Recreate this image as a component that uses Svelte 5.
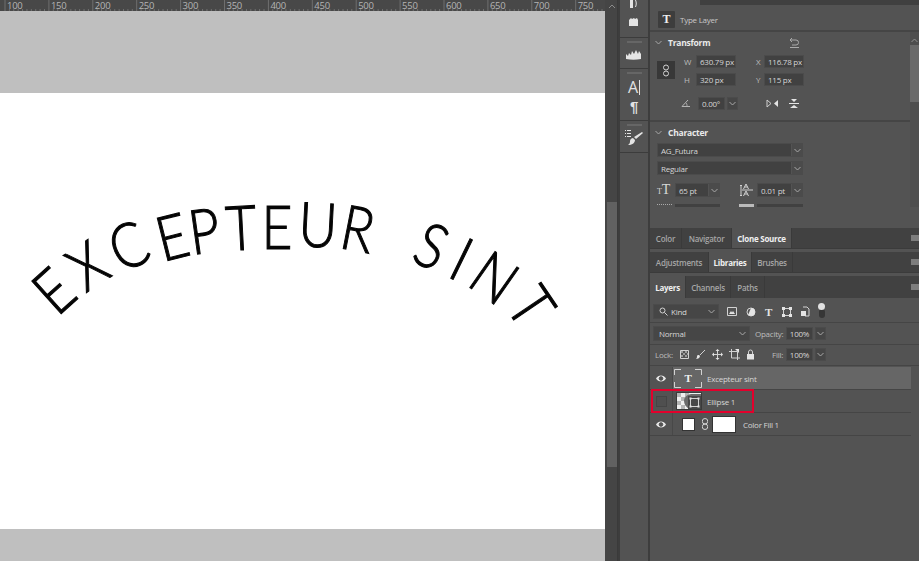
<script lang="ts">
  // Photoshop window: document canvas on the left, docked panels on the right.
  const rulerLabels = Array.from({ length: 14 }, (_, i) => ({ x: 5 + i * 43.9, label: String(100 + i * 50) }));
  const rulerTicks = Array.from({ length: 140 }, (_, i) => 5 + (i * 43.9) / 10).filter((_, i) => i % 10 !== 0);

  // curved type: centre point and rotation of each glyph
  const letters = [
    { c: 'E', x: 53, y: 290, r: -42 },
    { c: 'X', x: 87, y: 265, r: -33 },
    { c: 'C', x: 128, y: 245, r: -24 },
    { c: 'E', x: 172, y: 236, r: -14 },
    { c: 'P', x: 204, y: 230, r: -8 },
    { c: 'T', x: 241, y: 227, r: -3 },
    { c: 'E', x: 277, y: 226, r: 0 },
    { c: 'U', x: 318, y: 224, r: 3 },
    { c: 'R', x: 358, y: 228, r: 11 },
    { c: 'S', x: 432, y: 245, r: 24 },
    { c: 'I', x: 462, y: 258, r: 26 },
    { c: 'N', x: 495, y: 277, r: 35 },
    { c: 'T', x: 532, y: 306, r: 56 },
  ];
</script>

<div class="app">
  <div class="doc">
    <svg class="ruler" width="605" height="11">
      {#each rulerLabels as m}
        <line x1={m.x} x2={m.x} y1="0" y2="11" />
        <text x={m.x + 2} y="9">{m.label}</text>
      {/each}
      {#each rulerTicks as x}
        <line x1={x} x2={x} y1="9" y2="11" />
      {/each}
    </svg>
    <div class="paste top"></div>
    <div class="page">
      <svg class="type" width="605" height="436" viewBox="0 93 605 436">
        {#each letters as l}
          <text transform={`translate(${l.x} ${l.y}) rotate(${l.r}) scale(0.86 1)`} y="23" text-anchor="middle">{l.c}</text>
        {/each}
      </svg>
    </div>
    <div class="paste bottom"></div>
  </div>

  <div class="vscroll">
    <svg class="up" width="8" height="6" viewBox="0 0 8 6"><path d="M1 5l3-3 3 3" /></svg>
    <div class="thumb"></div>
  </div>

  <div class="strip">
    <div class="group g1">
      <svg width="16" height="34" viewBox="0 0 16 34">
        <path class="solid" d="M4 0h3v8H4zM9 0h1c1 2 1 5 0 7H9c1-2 1-5 0-7zM3 20l2-2 1 1 2-1 1 1 2-1 1 2v6H3z" />
      </svg>
    </div>
    <div class="group g2">
      <i class="grip"></i>
      <svg width="18" height="12" viewBox="0 0 18 12">
        <path class="solid" d="M1 5l2 2 1-3 2 2 1-4 2 3 2-4 2 4 1-3 2 3v5c-5 1-10 1-15 0z" />
      </svg>
    </div>
    <div class="group g3">
      <i class="grip"></i>
      <div class="a-glyph">A<b></b></div>
      <div class="pilcrow">¶</div>
    </div>
    <div class="group g4">
      <i class="grip"></i>
      <svg width="20" height="18" viewBox="0 0 20 18">
        <path class="solid" d="M1 1h1v1H1zM1 4h1v1H1zM1 7h1v1H1zM3 1h4v1H3zM3 4h4v1H3zM3 7h4v1H3zM18 3l1 1-7 6-2-2zM9 9l2 2c0 3-3 5-7 5 2-1 2-3 2-4 0-2 2-3 3-3z" />
      </svg>
    </div>
  </div>

  <div class="panels">
    <section class="properties">
      <div class="topfield"><span></span></div>
      <div class="kind">
        <span class="kind-icon">T</span>
        <span>Type Layer</span>
      </div>
      <div class="prop-body">
        <div class="prop-main">
          <div class="head transform-head">
            <svg class="chev" width="7" height="5" viewBox="0 0 7 5"><path d="M.5 1l3 3 3-3" /></svg>
            <strong>Transform</strong>
            <svg class="reset" width="11" height="11" viewBox="0 0 11 11"><path d="M3 1L1 3l2 2M1 3h6a2.500 2.500 0 0 1 0 5H3M1 10.500h9" /></svg>
          </div>
          <div class="transform">
            <div class="link">
              <svg width="8" height="13" viewBox="0 0 8 13"><path d="M4 1a2.500 2.500 0 0 1 0 5 2.500 2.500 0 0 1 0-5zM4 7a2.500 2.500 0 0 1 0 5 2.500 2.500 0 0 1 0-5z" /></svg>
            </div>
            <div class="tgrid">
              <span class="axis">W</span><span class="field">630.79 px</span>
              <span class="axis right">X</span><span class="field">116.78 px</span>
              <span class="axis">H</span><span class="field">320 px</span>
              <span class="axis right">Y</span><span class="field">115 px</span>
            </div>
          </div>
          <div class="angle-row">
            <svg class="angle" width="10" height="8" viewBox="0 0 10 8"><path d="M9 7.500H1L7 1M5 4c1 1 1 2 1 3.500" /></svg>
            <span class="field angle-field">0.00°</span>
            <span class="drop"><svg class="chev" width="7" height="5" viewBox="0 0 7 5"><path d="M.5 1l3 3 3-3" /></svg></span>
            <svg class="flip-h" width="13" height="9" viewBox="0 0 13 9"><path d="M1 1l4 3.500L1 8z" /><path class="solid" d="M12 1L8 4.500 12 8z" /></svg>
            <svg class="flip-v" width="10" height="11" viewBox="0 0 10 11"><path class="solid" d="M2 1h6L5 4zM0 5h10v1H0zM5 7l4 3H1z" /></svg>
          </div>

          <div class="head char-head">
            <svg class="chev" width="7" height="5" viewBox="0 0 7 5"><path d="M.5 1l3 3 3-3" /></svg>
            <strong>Character</strong>
          </div>
          <div class="select wide">AG_Futura<span class="drop-in"><svg class="chev" width="7" height="5" viewBox="0 0 7 5"><path d="M.5 1l3 3 3-3" /></svg></span></div>
          <div class="select wide second">Regular<span class="drop-in"><svg class="chev" width="7" height="5" viewBox="0 0 7 5"><path d="M.5 1l3 3 3-3" /></svg></span></div>
          <div class="size-row">
            <span class="size-icon"><small>T</small>T</span>
            <span class="select size">65 pt<span class="drop-in"><svg class="chev" width="7" height="5" viewBox="0 0 7 5"><path d="M.5 1l3 3 3-3" /></svg></span></span>
            <span class="lead-icon">
              <svg width="14" height="14" viewBox="0 0 14 14"><path d="M4.500 6L7 1l2.500 5M5.500 4h3M4.500 13L7 8l2.500 5M5.500 11h3M2 2v11M1 3l1-1 1 1M1 12l1 1 1-1M3 7h11" /></svg>
            </span>
            <span class="select lead">0.01 pt<span class="drop-in"><svg class="chev" width="7" height="5" viewBox="0 0 7 5"><path d="M.5 1l3 3 3-3" /></svg></span></span>
          </div>
          <div class="clip-row">
            <span class="clip-a"></span><span class="clip-field"></span>
            <span class="clip-b"></span><span class="clip-field right"></span>
          </div>
        </div>
        <div class="prop-scroll">
          <svg width="7" height="5" viewBox="0 0 7 5"><path d="M.5 4l3-3 3 3" /></svg>
          <div class="prop-thumb"></div>
        </div>
      </div>
    </section>

    <div class="tabs row1">
      <span class="tab w32">Color</span><span class="tab w50">Navigator</span><span class="tab on w60">Clone Source</span>
      <i class="menu"></i>
    </div>
    <div class="tabs row2">
      <span class="tab w59">Adjustments</span><span class="tab on w43">Libraries</span><span class="tab w41">Brushes</span>
      <i class="menu"></i>
    </div>
    <div class="tabs row3">
      <span class="tab on w36">Layers</span><span class="tab w45">Channels</span><span class="tab w34">Paths</span>
      <i class="menu"></i>
    </div>

    <div class="tool filter">
      <div class="select kindsel">
        <svg width="9" height="9" viewBox="0 0 9 9"><circle cx="3.500" cy="3.500" r="2.500" /><path d="M5.500 5.500L8.500 8.500" /></svg>
        Kind
        <svg class="chev end" width="7" height="5" viewBox="0 0 7 5"><path d="M.5 1l3 3 3-3" /></svg>
      </div>
      <div class="filter-icons">
        <svg width="10" height="9" viewBox="0 0 10 9"><path d="M.5.500h9v8h-9z" /><path class="solid" d="M2 7l2-3 1 1.500L6 4l2 3z" /></svg>
        <svg width="10" height="10" viewBox="0 0 10 10"><circle cx="5" cy="5" r="4" /><path class="solid" d="M5 1a4 4 0 0 1 0 8l-3-1z" /></svg>
        <span class="t-mark">T</span>
        <svg width="10" height="10" viewBox="0 0 10 10"><path d="M1.500 1.500h7v7h-7z" /><path class="solid" d="M0 0h3v3H0zM7 0h3v3H7zM0 7h3v3H0zM7 7h3v3H7z" /></svg>
        <svg width="10" height="11" viewBox="0 0 10 11"><path d="M3 1h4l2 2v7H5" /><path class="solid" d="M1 5h5v5H1z" /></svg>
      </div>
      <div class="toggle"><i></i></div>
    </div>

    <div class="tool blend">
      <div class="select normal">Normal<svg class="chev end" width="7" height="5" viewBox="0 0 7 5"><path d="M.5 1l3 3 3-3" /></svg></div>
      <span class="lbl opacity">Opacity:</span>
      <span class="field pct">100%</span>
      <span class="drop small"><svg class="chev" width="7" height="5" viewBox="0 0 7 5"><path d="M.5 1l3 3 3-3" /></svg></span>
    </div>

    <div class="tool lock">
      <span class="lbl">Lock:</span>
      <div class="lock-icons">
        <svg width="9" height="9" viewBox="0 0 9 9"><path d="M.5.500h8v8h-8z" /><path class="solid dim" d="M1 1h2v2H1zM5 1h2v2H5zM3 3h2v2H3zM7 3h1v2H7zM1 5h2v2H1zM5 5h2v2H5z" /></svg>
        <svg width="11" height="11" viewBox="0 0 11 11"><path d="M10 1L5 6" /><path class="solid" d="M4 6l1 1c0 2-2 3-4 3 1-1 1-2 1-3 0-1 1-1 2-1z" /></svg>
        <svg width="11" height="11" viewBox="0 0 11 11"><path d="M5.500 1v9M1 5.500h9" /><path class="solid" d="M5.500 0l2 2h-4zM5.500 11l-2-2h4zM0 5.500l2-2v4zM11 5.500l-2 2v-4z" /></svg>
        <svg width="11" height="11" viewBox="0 0 11 11"><path d="M2.500 0v9H11M0 2.500h8.500V11" /><path class="solid" d="M6 0h4v4z" /></svg>
        <svg width="9" height="11" viewBox="0 0 9 11"><path d="M2.500 5V3a2 2 0 0 1 4 0v2" /><path class="solid" d="M1 5h7v5.500H1z" /></svg>
      </div>
      <span class="lbl fill">Fill:</span>
      <span class="field pct">100%</span>
      <span class="drop small"><svg class="chev" width="7" height="5" viewBox="0 0 7 5"><path d="M.5 1l3 3 3-3" /></svg></span>
    </div>

    <div class="layers">
      <div class="layer">
        <span class="eye-col"><svg class="eye" width="10" height="7" viewBox="0 0 10 7"><path class="solid" d="M0 3.500C2-.5 8-.5 10 3.500 8 7.500 2 7.500 0 3.500z" /><circle class="hole" cx="5" cy="3.500" r="1.800" /></svg></span>
        <div class="layer-body selected">
          <div class="type-thumb">
            <svg class="brackets" width="28" height="19" viewBox="0 0 28 19"><path d="M7 .5H.5V6M21 .5h6.500V6M7 18.500H.5V13M21 18.500h6.500V13" /></svg>
            <span>T</span>
          </div>
          <span class="name">Excepteur sint</span>
        </div>
      </div>
      <div class="layer">
        <span class="eye-col"><i class="off"></i></span>
        <div class="layer-body">
          <div class="shape-thumb">
            <svg width="24" height="16" viewBox="0 0 24 16">
              <rect class="paper" width="24" height="16" />
              <path class="chk" d="M0 0h4v4H0zM8 0h4v4H8zM4 4h4v4H4zM0 8h4v4H0zM8 8h4v4H8zM4 12h4v4H4z" />
              <path class="blob" d="M14 1C9 2 7 5 7 8c0 3 2 6 5 8h12V1z" />
              <rect class="corner" x="11" y="3" width="13" height="13" />
              <path d="M13.500 5.500h8v8h-8z" />
              <path class="solid" d="M12.500 4.500h2v2h-2zM20.500 4.500h2v2h-2zM12.500 12.500h2v2h-2zM20.500 12.500h2v2h-2z" />
            </svg>
          </div>
          <span class="name">Ellipse 1</span>
        </div>
        <div class="callout"></div>
      </div>
      <div class="layer">
        <span class="eye-col"><svg class="eye" width="10" height="7" viewBox="0 0 10 7"><path class="solid" d="M0 3.500C2-.5 8-.5 10 3.500 8 7.500 2 7.500 0 3.500z" /><circle class="hole" cx="5" cy="3.500" r="1.800" /></svg></span>
        <div class="layer-body fillrow">
          <span class="swatch"></span>
          <svg class="chain" width="6" height="12" viewBox="0 0 6 12"><path d="M3 .500a2.300 2.300 0 0 1 0 5.500 2.300 2.300 0 0 1 0-5.500zM3 6a2.300 2.300 0 0 1 0 5.500A2.300 2.300 0 0 1 3 6z" /></svg>
          <span class="mask"></span>
          <span class="name color-name">Color Fill 1</span>
        </div>
      </div>
    </div>
  </div>
</div>

<style>
  :global(body) {
    margin: 0;
    background: #535353;
  }
  .app {
    display: flex;
    width: 919px;
    height: 561px;
    overflow: hidden;
    font-family: "Open Sans", "Liberation Sans", sans-serif;
    font-size: 8px;
    letter-spacing: -0.25px;
    color: #d4d4d4;
  }
  svg {
    display: block;
    flex: none;
  }
  svg path, svg circle {
    fill: none;
    stroke: #d2d2d2;
    stroke-width: 1;
  }
  svg path.solid {
    fill: #e4e4e4;
    stroke: none;
  }
  svg path.dim {
    fill: #9a9a9a;
  }

  /* document */
  .doc {
    width: 605px;
    flex: none;
    display: flex;
    flex-direction: column;
  }
  .ruler {
    background: #484848;
  }
  .ruler line {
    stroke: #8a8a8a;
    stroke-width: 0.6;
  }
  .ruler text {
    font-family: "Open Sans", sans-serif;
    font-size: 9.5px;
    fill: #b4b4b4;
  }
  .paste {
    background: #bfbfbf;
  }
  .top {
    height: 82px;
  }
  .bottom {
    flex: 1;
  }
  .page {
    height: 436px;
    background: #fff;
  }
  .type text {
    font-family: Lato, sans-serif;
    font-weight: 300;
    font-size: 62px;
    letter-spacing: 0;
    fill: #050505;
    stroke: #050505;
    stroke-width: 1.1px;
  }

  .vscroll {
    width: 13px;
    flex: none;
    box-sizing: border-box;
    padding-left: 2px;
    background: #454545;
    border-right: 1px solid #3a3a3a;
    display: flex;
    flex-direction: column;
    align-items: center;
  }
  .up {
    margin-top: 3px;
  }
  .up path {
    stroke: #8b8b8b;
  }
  .thumb {
    width: 10px;
    height: 265px;
    margin-top: 193px;
    background: #616161;
  }

  /* tool strip */
  .strip {
    width: 32px;
    flex: none;
    box-sizing: border-box;
    background: #535353;
    border-left: 2px solid #3d3d3d;
    border-right: 2px solid #3d3d3d;
  }
  .group {
    border-bottom: 1px solid #3c3c3c;
    display: flex;
    flex-direction: column;
    align-items: center;
    box-sizing: border-box;
  }
  .g1 { height: 38px; }
  .g2 { height: 31px; }
  .g3 { height: 52px; }
  .g4 { height: 32px; }
  .grip {
    display: block;
    width: 15px;
    height: 2px;
    margin: 3px 0 5px;
    background: #666;
  }
  .g2 svg { margin-top: 1px; }
  .a-glyph {
    display: flex;
    align-items: center;
    height: 20px;
    margin-top: -2px;
    font-family: "Open Sans", sans-serif;
    font-size: 16px;
    color: #e2e2e2;
  }
  .a-glyph b {
    width: 1px;
    height: 15px;
    margin-left: 1px;
    background: #e2e2e2;
  }
  .pilcrow {
    font-family: "Liberation Sans", sans-serif;
    font-size: 15px;
    font-weight: 700;
    color: #e2e2e2;
    line-height: 20px;
  }
  .g4 svg { margin-top: -2px; }

  /* right dock */
  .panels {
    flex: 1;
    min-width: 0;
    background: #535353;
    display: flex;
    flex-direction: column;
  }
  .topfield {
    height: 5px;
    padding-left: 50px;
  }
  .topfield span {
    display: block;
    height: 5px;
    background: #404040;
  }
  .kind {
    height: 27px;
    box-sizing: border-box;
    display: flex;
    align-items: center;
    gap: 5px;
    padding: 3px 0 0 8px;
    border-bottom: 2px solid #454545;
    color: #c8c8c8;
  }
  .kind-icon {
    width: 17px;
    height: 17px;
    background: #3d3d3d;
    border-radius: 1px;
    display: flex;
    align-items: center;
    justify-content: center;
    font-family: "Liberation Serif", serif;
    font-weight: 700;
    font-size: 12px;
    color: #eee;
  }
  .prop-body {
    display: flex;
    height: 175px;
  }
  .prop-main {
    flex: 1;
    overflow: hidden;
    padding-left: 7px;
  }
  .head {
    display: flex;
    align-items: center;
    height: 18px;
    gap: 6px;
    color: #eaeaea;
  }
  .head strong {
    font-size: 8.500px;
    font-weight: 700;
  }
  .transform-head {
    margin: 1px 0 0 -2px;
  }
  .chev path {
    stroke: #a8a8a8;
  }
  .reset {
    margin-left: 73px;
  }
  .reset path {
    stroke: #aaa;
  }
  .transform {
    display: flex;
    align-items: center;
    height: 40px;
    margin-top: -1px;
  }
  .link {
    width: 18px;
    height: 18px;
    background: #383838;
    display: flex;
    align-items: center;
    justify-content: center;
    margin-right: 9px;
  }
  .tgrid {
    display: grid;
    grid-template-columns: 12px 40px 28px 40px;
    row-gap: 5px;
    align-items: center;
  }
  .axis {
    color: #bcbcbc;
  }
  .axis.right {
    margin-left: 20px;
  }
  .field {
    display: flex;
    align-items: center;
    height: 13px;
    box-sizing: border-box;
    padding-left: 3px;
    background: #414141;
    border: 1px solid #4b4b4b;
    color: #d6d6d6;
    white-space: nowrap;
    overflow: hidden;
  }
  .angle-row {
    display: flex;
    align-items: center;
    height: 14px;
    margin-top: 6px;
    padding-left: 24px;
  }
  .angle {
    margin-right: 7px;
  }
  .angle path {
    stroke: #b4b4b4;
  }
  .angle-field {
    width: 27px;
  }
  .drop {
    width: 11px;
    height: 13px;
    margin-left: 2px;
    background: #464646;
    border: 1px solid #4b4b4b;
    box-sizing: border-box;
    display: flex;
    align-items: center;
    justify-content: center;
  }
  .flip-h {
    margin-left: 28px;
  }
  .flip-h path {
    stroke: #cfcfcf;
  }
  .flip-v {
    margin-left: 10px;
  }
  .char-head {
    margin-top: 10px;
    border-top: 2px solid #454545;
    margin-left: -7px;
    padding-left: 5px;
    height: 20px;
  }
  .select {
    display: flex;
    align-items: center;
    box-sizing: border-box;
    position: relative;
    background: #414141;
    border: 1px solid #4b4b4b;
    color: #d6d6d6;
    padding-left: 3px;
    height: 14px;
  }
  .wide {
    width: 146px;
    margin-top: 1px;
  }
  .second {
    margin-top: 4px;
  }
  .drop-in {
    margin-left: auto;
    width: 10px;
    height: 100%;
    background: #4b4b4b;
    border-left: 1px solid #535353;
    display: flex;
    align-items: center;
    justify-content: center;
  }
  .size-row {
    display: flex;
    align-items: center;
    margin-top: 8px;
    height: 14px;
  }
  .size-icon {
    width: 18px;
    font-family: "Liberation Serif", serif;
    font-size: 14px;
    color: #d8d8d8;
    white-space: nowrap;
  }
  .size-icon small {
    font-size: 8px;
  }
  .size {
    width: 45px;
  }
  .lead-icon {
    margin-left: 19px;
    width: 18px;
  }
  .lead {
    width: 46px;
  }
  .clip-row {
    display: flex;
    height: 3px;
    margin-top: 7px;
  }
  .clip-a {
    width: 15px;
    height: 2px;
    margin-right: 3px;
    border-top: 1px dotted #aaa;
  }
  .clip-b {
    width: 15px;
    height: 3px;
    margin-left: 19px;
    margin-right: 3px;
    background: #bbb;
  }
  .clip-field {
    width: 45px;
    background: #414141;
  }
  .clip-field.right {
    width: 46px;
  }
  .prop-scroll {
    width: 9px;
    flex: none;
    background: #4e4e4e;
    display: flex;
    flex-direction: column;
    align-items: center;
    padding-top: 6px;
    box-sizing: border-box;
  }
  .prop-scroll path {
    stroke: #909090;
  }
  .prop-thumb {
    width: 9px;
    height: 57px;
    margin-top: 2px;
    background: #6a6a6a;
  }

  .tabs {
    display: flex;
    background: #414141;
    height: 21px;
    box-sizing: border-box;
    align-items: stretch;
    border-bottom: 1px solid #3b3b3b;
    color: #a6a6a6;
  }
  .row1 {
    margin-top: 21px;
  }
  .row2 {
    margin-top: 3px;
  }
  .row3 {
    margin-top: 3px;
    height: 22px;
    border-bottom: none;
  }
  .tab {
    display: flex;
    align-items: center;
    justify-content: center;
    box-sizing: border-box;
    border-right: 1px solid #3a3a3a;
    font-weight: 600;
  }
  .tab.on {
    background: #535353;
    color: #f0f0f0;
    font-weight: 700;
  }
  .w32 { width: 32px; }
  .w50 { width: 50px; }
  .w60 { width: 60px; }
  .w59 { width: 59px; }
  .w43 { width: 43px; }
  .w41 { width: 41px; }
  .w36 { width: 36px; }
  .w45 { width: 45px; }
  .w34 { width: 34px; }
  .menu {
    margin: auto 0 auto auto;
    width: 8px;
    height: 6px;
    background: #7d7d7d;
  }

  .tool {
    display: flex;
    align-items: center;
    box-sizing: border-box;
    padding-left: 3px;
    border-bottom: 1px solid #454545;
  }
  .filter {
    height: 25px;
    padding-top: 3px;
  }
  .kindsel {
    width: 66px;
    height: 15px;
    gap: 3px;
    padding-left: 5px;
    background: #464646;
  }
  .end {
    margin-left: auto;
    margin-right: 3px;
  }
  .filter-icons {
    display: flex;
    align-items: center;
    gap: 8.500px;
    margin-left: 8px;
  }
  .t-mark {
    font-family: "Liberation Serif", serif;
    font-weight: 700;
    font-size: 11px;
    color: #e4e4e4;
    line-height: 10px;
    width: 9px;
    text-align: center;
  }
  .toggle {
    position: relative;
    width: 6px;
    height: 9px;
    margin: 3px 0 0 9px;
    background: #363636;
    border-radius: 3px;
  }
  .toggle i {
    position: absolute;
    left: -1px;
    top: -6px;
    width: 7px;
    height: 7px;
    border-radius: 50%;
    background: #e2e2e2;
  }
  .blend {
    height: 22px;
  }
  .normal {
    width: 97px;
    height: 15px;
    padding-left: 5px;
    background: #464646;
  }
  .lbl {
    color: #bdbdbd;
    white-space: nowrap;
  }
  .opacity {
    margin-left: 5px;
    width: 31px;
  }
  .pct {
    width: 27px;
    justify-content: center;
    padding-left: 0;
  }
  .small {
    margin-left: 2px;
  }
  .lock {
    height: 21px;
    padding: 0 0 2px 5px;
  }
  .lock .lbl:first-child {
    width: 23px;
  }
  .lock-icons {
    display: flex;
    align-items: center;
    gap: 6px;
    width: 92px;
    margin-left: 2px;
  }
  .fill {
    width: 14px;
  }

  .layers {
    display: flex;
    flex-direction: column;
    padding-top: 1px;
  }
  .layer {
    position: relative;
    display: flex;
    height: 23px;
    box-sizing: border-box;
    border-bottom: 1px solid #454545;
    margin-right: 8px;
  }
  .eye-col {
    width: 23px;
    flex: none;
    display: flex;
    align-items: center;
    justify-content: center;
    border-right: 1px solid #484848;
    box-sizing: border-box;
  }
  .eye .hole {
    fill: #535353;
    stroke: #535353;
  }
  .eye path.solid {
    fill: #e8e8e8;
  }
  .eye-col .off {
    width: 9px;
    height: 9px;
    background: #4f4f4f;
    border: 1px solid #454545;
  }
  .layer-body {
    flex: 1;
    display: flex;
    align-items: center;
    color: #d6d6d6;
  }
  .selected {
    background: #666;
  }
  .type-thumb {
    position: relative;
    width: 28px;
    height: 19px;
    margin-left: 1px;
    display: flex;
    align-items: center;
    justify-content: center;
    font-family: "Liberation Serif", serif;
    font-weight: 700;
    font-size: 11px;
    color: #f2f2f2;
  }
  .brackets {
    position: absolute;
    left: 0;
    top: 0;
  }
  .name {
    margin-left: 5px;
    white-space: nowrap;
  }
  .shape-thumb {
    margin-left: 3px;
    border: 1px solid #3a3a3a;
  }
  .paper {
    fill: #efefef;
  }
  .shape-thumb path.chk {
    fill: #b5b5b5;
    stroke: none;
  }
  .shape-thumb path.blob {
    fill: #6a6a6a;
    stroke: none;
  }
  .corner {
    fill: #474747;
  }
  .fillrow .swatch {
    width: 13px;
    height: 13px;
    margin-left: 9px;
    background: #fff;
    border: 1px solid #333;
    box-sizing: border-box;
  }
  .chain {
    margin-left: 7px;
  }
  .mask {
    width: 24px;
    height: 17px;
    margin-left: 4px;
    background: #fff;
    border: 1px solid #333;
    box-sizing: border-box;
  }
  .color-name {
    margin-left: 7px;
  }
  .callout {
    position: absolute;
    left: 1px;
    top: -1px;
    width: 103px;
    height: 24px;
    box-sizing: border-box;
    border: 2px solid #e3002c;
  }
</style>
